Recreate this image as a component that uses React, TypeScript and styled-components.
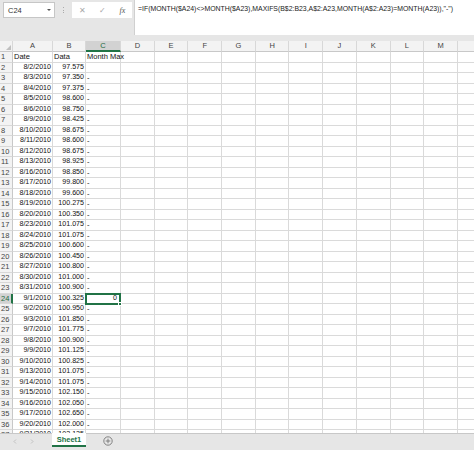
import React from 'react';
import styled, { createGlobalStyle } from 'styled-components';

const Global = createGlobalStyle`
  html, body { margin: 0; padding: 0; background: #fff; }
  body { font-family: "Liberation Sans", Arial, sans-serif; }
`;

const COLS = ['A', 'B', 'C', 'D', 'E', 'F', 'G', 'H', 'I', 'J', 'K', 'L', 'M', 'N'];
const GRID = '13px 40px 33px 35px repeat(10, 33.7px) 40px';
const ROW_H = 10.5;

const rows: [string, string, string][] = [
  ['8/2/2010', '97.575', ''],
  ['8/3/2010', '97.350', '-'],
  ['8/4/2010', '97.375', '-'],
  ['8/5/2010', '98.600', '-'],
  ['8/6/2010', '98.750', '-'],
  ['8/9/2010', '98.425', '-'],
  ['8/10/2010', '98.675', '-'],
  ['8/11/2010', '98.600', '-'],
  ['8/12/2010', '98.675', '-'],
  ['8/13/2010', '98.925', '-'],
  ['8/16/2010', '98.850', '-'],
  ['8/17/2010', '99.800', '-'],
  ['8/18/2010', '99.600', '-'],
  ['8/19/2010', '100.275', '-'],
  ['8/20/2010', '100.350', '-'],
  ['8/23/2010', '101.075', '-'],
  ['8/24/2010', '101.075', '-'],
  ['8/25/2010', '100.600', '-'],
  ['8/26/2010', '100.450', '-'],
  ['8/27/2010', '100.800', '-'],
  ['8/30/2010', '101.000', '-'],
  ['8/31/2010', '100.900', '-'],
  ['9/1/2010', '100.325', '0'],
  ['9/2/2010', '100.950', '-'],
  ['9/3/2010', '101.850', '-'],
  ['9/7/2010', '101.775', '-'],
  ['9/8/2010', '100.900', '-'],
  ['9/9/2010', '101.125', '-'],
  ['9/10/2010', '100.825', '-'],
  ['9/13/2010', '101.075', '-'],
  ['9/14/2010', '101.075', '-'],
  ['9/15/2010', '102.150', '-'],
  ['9/16/2010', '102.050', '-'],
  ['9/17/2010', '102.650', '-'],
  ['9/20/2010', '102.000', '-'],
  ['9/21/2010', '102.125', '-'],
];

const Page = styled.div`
  width: 474px;
  height: 450px;
  overflow: hidden;
  display: flex;
  flex-direction: column;
  background: #fff;
  font-size: 7.5px;
  color: #222;
`;

const TopBar = styled.div`
  height: 41px;
  flex: none;
  background: #e6e6e6;
  display: flex;
  align-items: flex-start;
  padding: 2px 0 0 3px;
  box-sizing: border-box;
`;

const NameBox = styled.div`
  width: 52px;
  height: 16px;
  box-sizing: border-box;
  background: #fff;
  border: 1px solid #c6c6c6;
  display: flex;
  align-items: center;
  justify-content: space-between;
  padding: 0 3px 0 4px;
  color: #333;
`;

const Caret = styled.span`
  width: 0;
  height: 0;
  border-left: 2px solid transparent;
  border-right: 2px solid transparent;
  border-top: 2px solid #555;
`;

const Dots = styled.div`
  width: 17px;
  height: 16px;
  display: flex;
  flex-direction: column;
  align-items: center;
  justify-content: center;
  gap: 1.5px;
  & > i { width: 1px; height: 1px; background: #aaa; display: block; }
`;

const FxButtons = styled.div`
  width: 60px;
  height: 16px;
  background: #fff;
  display: flex;
  align-items: center;
  justify-content: space-around;
  color: #a8a8a8;
  font-size: 8px;
`;

const Fx = styled.span`
  font-family: "Liberation Serif", serif;
  font-style: italic;
  color: #555;
  font-size: 8px;
`;

const FormulaBox = styled.div`
  flex: 1;
  height: 35px;
  margin-left: 2px;
  margin-top: -2px;
  background: #fff;
  border-left: 1px solid #d0d0d0;
  padding: 5px 0 0 3px;
  box-sizing: border-box;
  white-space: nowrap;
  overflow: hidden;
  color: #222;
  font-size: 6.9px;
`;

const Sheet = styled.div`
  flex: 1;
  overflow: hidden;
`;

const Row = styled.div`
  display: grid;
  grid-template-columns: ${GRID};
  height: ${ROW_H}px;
`;

const HeadRow = styled(Row)`
  height: 11px;
  background: #f3f3f3;
`;

const ColHead = styled.div<{ $sel?: boolean }>`
  box-sizing: border-box;
  border-right: 1px solid #d8d8d8;
  border-bottom: ${p => (p.$sel ? '2px solid #217346' : '1px solid #c8c8c8')};
  background: ${p => (p.$sel ? '#d2d2d2' : '#f3f3f3')};
  color: ${p => (p.$sel ? '#1e6b40' : '#444')};
  display: flex;
  align-items: center;
  justify-content: center;
  line-height: 1;
`;

const Corner = styled(ColHead)`
  position: relative;
  &::after {
    content: '';
    position: absolute;
    right: 1px;
    bottom: 1px;
    border-left: 5px solid transparent;
    border-bottom: 5px solid #c0c0c0;
  }
`;

const RowHead = styled.div<{ $sel?: boolean }>`
  box-sizing: border-box;
  background: ${p => (p.$sel ? '#d2d2d2' : '#f3f3f3')};
  color: ${p => (p.$sel ? '#1e6b40' : '#444')};
  border-right: ${p => (p.$sel ? '2px solid #217346' : '1px solid #c8c8c8')};
  border-bottom: 1px solid #d8d8d8;
  display: flex;
  align-items: center;
  padding-left: 1px;
  line-height: 1;
`;

const Cell = styled.div<{ $align?: 'left' | 'right' }>`
  box-sizing: border-box;
  border-right: 1px solid #dadada;
  border-bottom: 1px solid #dadada;
  display: flex;
  align-items: center;
  justify-content: ${p => (p.$align === 'right' ? 'flex-end' : 'flex-start')};
  padding: 0 1px 0 1px;
  white-space: nowrap;
  line-height: 1;
  color: #111;
  font-size: ${p => (p.$align === 'right' ? '7.1px' : '7.5px')};
`;

const ActiveCell = styled(Cell)`
  position: relative;
  border: 2px solid #217346;
  margin: -1px 0 -1px -1px;
  padding-right: 2px;
  z-index: 1;
  &::after {
    content: '';
    position: absolute;
    right: -3px;
    bottom: -3px;
    width: 4px;
    height: 4px;
    background: #217346;
    border: 1px solid #fff;
    box-sizing: border-box;
  }
`;

const TabBar = styled.div`
  height: 17px;
  flex: none;
  background: #e6e6e6;
  border-top: 1px solid #c8c8c8;
  display: flex;
  align-items: flex-start;
  box-sizing: border-box;
`;

const NavArrows = styled.div`
  width: 52px;
  height: 14px;
  flex: none;
  display: flex;
  align-items: center;
  gap: 13px;
  padding-left: 13px;
  box-sizing: border-box;
`;

const Tab = styled.div`
  width: 34px;
  height: 14px;
  flex: none;
  margin-top: -1px;
  background: #fff;
  border-bottom: 2px solid #217346;
  box-sizing: border-box;
  display: flex;
  align-items: center;
  justify-content: center;
  color: #217346;
  font-weight: bold;
  font-size: 7.5px;
`;

const AddSheet = styled.div`
  margin: 2px 0 0 17px;
  width: 10px;
  height: 10px;
  display: flex;
  align-items: center;
  justify-content: center;
`;

const Arrow = ({ left }: { left?: boolean }) => (
  <svg width="4" height="5" viewBox="0 0 4 5">
    <path d={left ? 'M3 0.5L1 2.5L3 4.5' : 'M1 0.5L3 2.5L1 4.5'} fill="none" stroke="#b8b8b8" strokeWidth="0.8" />
  </svg>
);

export default function App() {
  return (
    <>
      <Global />
      <Page>
        <TopBar>
          <NameBox>
            C24
            <Caret />
          </NameBox>
          <Dots>
            <i />
            <i />
            <i />
          </Dots>
          <FxButtons>
            <span>✕</span>
            <span>✓</span>
            <Fx>fx</Fx>
          </FxButtons>
          <FormulaBox>
            =IF(MONTH($A24)&lt;&gt;MONTH($A23),MAXIFS(B$2:B23,A$2:A23,MONTH(A$2:A23)=MONTH(A23)),"-")
          </FormulaBox>
        </TopBar>
        <Sheet>
          <HeadRow>
            <Corner />
            {COLS.map(c => (
              <ColHead key={c} $sel={c === 'C'}>
                {c}
              </ColHead>
            ))}
          </HeadRow>
          <Row>
            <RowHead>1</RowHead>
            <Cell>Date</Cell>
            <Cell>Data</Cell>
            <Cell>Month Max</Cell>
            {COLS.slice(3).map(c => (
              <Cell key={c} />
            ))}
          </Row>
          {rows.map(([d, v, m], i) => {
            const n = i + 2;
            const active = n === 24;
            return (
              <Row key={n}>
                <RowHead $sel={active}>{n}</RowHead>
                <Cell $align="right">{d}</Cell>
                <Cell $align="right">{v}</Cell>
                {active ? <ActiveCell $align="right">{m}</ActiveCell> : <Cell>{m}</Cell>}
                {COLS.slice(3).map(c => (
                  <Cell key={c} />
                ))}
              </Row>
            );
          })}
        </Sheet>
        <TabBar>
          <NavArrows>
            <Arrow left />
            <Arrow />
          </NavArrows>
          <Tab>Sheet1</Tab>
          <AddSheet>
            <svg width="10" height="10" viewBox="0 0 10 10">
              <circle cx="5" cy="5" r="4.2" fill="none" stroke="#777" strokeWidth="0.9" />
              <path d="M5 2.7v4.6M2.7 5h4.6" stroke="#777" strokeWidth="0.9" />
            </svg>
          </AddSheet>
        </TabBar>
      </Page>
    </>
  );
}
